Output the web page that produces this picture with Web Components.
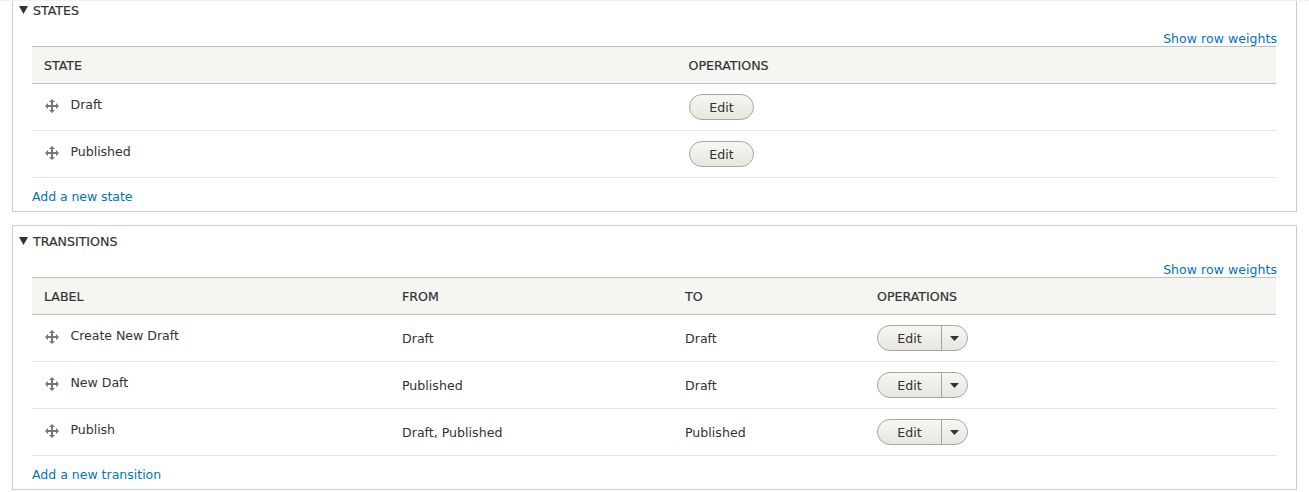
<!DOCTYPE html>
<html>
<head>
<meta charset="utf-8">
<title>Workflow</title>
<style>
  html, body { margin: 0; height: 492px; overflow: hidden; background: #fff; }
  body { font: 12.6px/19px "DejaVu Sans", sans-serif; color: #333; }
  main { display: flex; flex-direction: column; gap: 13px; padding: 0 12px; margin-top: -6px; }
  /* strip of the page above that is still visible at the top */
  .edge { position: fixed; top: 0; left: 0; right: 0; height: 1px; background: #f2f2f2; }
</style>
</head>
<body>
<template id="fieldset-tpl">
  <style>
    :host { display: block; border: 1px solid #ccc; padding: 0 20px 0 19px; background: #fff; }
    header { display: flex; align-items: center; height: 30px; margin-left: -13px; gap: 5px; text-transform: uppercase; color: #333; font-size: 12.6px; -webkit-text-stroke: .2px #333; }
    header svg { width: 9px; height: 8px; flex: none; }
    .weights { display: block; text-align: right; height: 21px; line-height: 28px; margin-right: -1px; font-size: 12.500px; letter-spacing: .05px; }
    a { color: #0074bd; text-decoration: none; }
    .add { display: block; height: 33px; line-height: 37px; font-size: 12.500px; }
  </style>
  <header><svg viewBox="0 0 9 8"><path d="M0 0h9L4.500 8z" fill="#333"/></svg><slot name="title"></slot></header>
  <a class="weights" href="#">Show row weights</a>
  <slot></slot>
  <a class="add" href="#"><slot name="add"></slot></a>
</template>

<template id="table-tpl">
  <style>
    :host { display: grid; grid-template-columns: var(--cols); }
    ::slotted(*) { grid-column: 1 / -1; }
  </style>
  <slot></slot>
</template>

<template id="row-tpl">
  <style>
    :host {
      display: grid; grid-template-columns: subgrid; align-items: center; height: 46px;
      border-bottom: 1px solid #e6e4df; font-size: 12.6px;
    }
    :host([head]) {
      height: 36px; background: #f5f5f2; border-top: 1px solid #bfbfba; border-bottom: 1px solid #bfbfba;
      text-transform: uppercase; color: #333; -webkit-text-stroke: .2px #333;
    }
    ::slotted(*) { padding-left: 12px; }
  </style>
  <slot></slot>
</template>

<template id="handle-tpl">
  <style>
    :host { display: flex; align-items: center; gap: 12.500px; padding-left: 13px; }
    svg { width: 14px; height: 14px; flex: none; position: relative; left: 1px; top: -1px; }
    span { position: relative; top: -3px; letter-spacing: -.05px; }
  </style>
  <svg viewBox="0 0 14 14"><path fill="#777" d="M7 0l3 3H8v3h3V4l3 3-3 3V8H8v3h2l-3 3-3-3h2V8H3v2L0 7l3-3v2h3V3H4z"/></svg>
  <span><slot></slot></span>
</template>

<template id="button-tpl">
  <style>
    :host { display: inline-flex; }
    .btn {
      display: flex; height: 24px; box-sizing: content-box; border: 1px solid #a6a69f; border-radius: 20px;
      background: linear-gradient(#f6f6f3, #e7e7df); font-size: 12.6px; line-height: 26px; color: #333; overflow: hidden;
    }
    .main { width: 63px; text-align: center; padding-left: 1px; box-sizing: border-box; }
    :host([drop]) .main { width: 64px; padding-left: 0; border-right: 1px solid #a6a69f; }
    .arrow { display: none; width: 25px; align-items: center; justify-content: center; }
    :host([drop]) .arrow { display: flex; }
    svg { width: 9px; height: 5px; }
  </style>
  <div class="btn"><div class="main"><slot></slot></div><div class="arrow"><svg viewBox="0 0 9 5"><path d="M0 0h9L4.500 5z" fill="#333"/></svg></div></div>
</template>

<div class="edge"></div>
<main>
  <wf-fieldset>
    <span slot="title">States</span>
    <wf-table style="--cols: 644.500px 1fr">
      <wf-row head><div>State</div><div>Operations</div></wf-row>
      <wf-row><wf-handle>Draft</wf-handle><div><wf-button>Edit</wf-button></div></wf-row>
      <wf-row><wf-handle>Published</wf-handle><div><wf-button>Edit</wf-button></div></wf-row>
    </wf-table>
    <span slot="add" style="letter-spacing: -.06px">Add a new state</span>
  </wf-fieldset>
  <wf-fieldset>
    <span slot="title">Transitions</span>
    <wf-table style="--cols: 358px 283px 192px 1fr">
      <wf-row head><div>Label</div><div>From</div><div>To</div><div>Operations</div></wf-row>
      <wf-row><wf-handle>Create New Draft</wf-handle><div>Draft</div><div>Draft</div><div><wf-button drop>Edit</wf-button></div></wf-row>
      <wf-row><wf-handle>New Daft</wf-handle><div>Published</div><div>Draft</div><div><wf-button drop>Edit</wf-button></div></wf-row>
      <wf-row><wf-handle>Publish</wf-handle><div>Draft, Published</div><div>Published</div><div><wf-button drop>Edit</wf-button></div></wf-row>
    </wf-table>
    <span slot="add">Add a new transition</span>
  </wf-fieldset>
</main>

<script>
function define (name, tplId) {
  customElements.define(name, class extends HTMLElement {
    constructor () {
      super();
      const shadow = this.attachShadow({ mode: 'open' });
      shadow.appendChild(document.getElementById(tplId).content.cloneNode(true));
    }
  });
}
define('wf-fieldset', 'fieldset-tpl');
define('wf-table', 'table-tpl');
define('wf-row', 'row-tpl');
define('wf-handle', 'handle-tpl');
define('wf-button', 'button-tpl');
</script>
</body>
</html>
